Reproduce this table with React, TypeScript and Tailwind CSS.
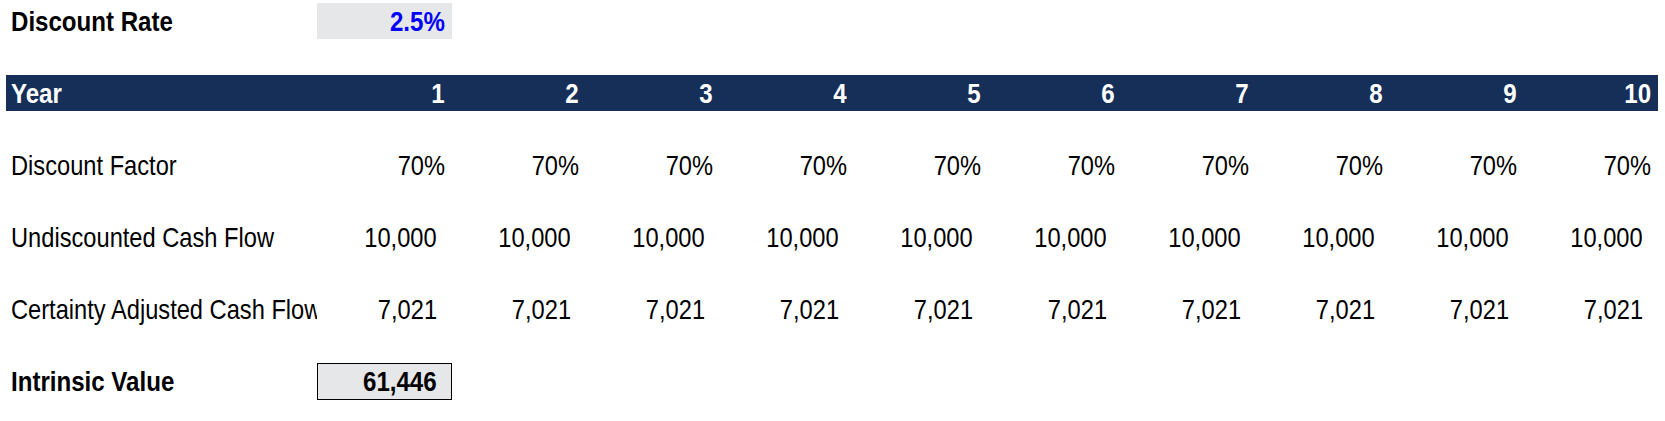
const years = [1, 2, 3, 4, 5, 6, 7, 8, 9, 10];

const rows = [
  { label: "Discount Factor", value: "70%", pad: "pr-[7px]" },
  { label: "Undiscounted Cash Flow", value: "10,000", pad: "pr-[15px]" },
  { label: "Certainty Adjusted Cash Flow", value: "7,021", pad: "pr-[15px]" },
];

// Arial Narrow is not installed: squeeze Liberation Sans to its width
function Narrow({ children, right, bold }: { children: React.ReactNode; right?: boolean; bold?: boolean }) {
  return (
    <span
      className={`inline-block whitespace-nowrap ${right ? "origin-right" : "origin-left"} ${
        bold ? "scale-x-[0.86] font-bold" : "scale-x-[0.845]"
      }`}
    >
      {children}
    </span>
  );
}

function Spacer() {
  return <div className="col-span-11" />;
}

export default function App() {
  return (
    <div className="h-[421px] w-[1665px] overflow-hidden bg-white pl-[6px] pt-[3px] font-['Liberation_Sans',Arial,sans-serif] text-[28px] leading-[38px] text-black">
      <div className="grid grid-cols-[311px_135px_repeat(9,134px)] auto-rows-[36px]">
        <div className="pl-[5px]">
          <Narrow bold>Discount Rate</Narrow>
        </div>
        <div className="bg-[#e6e7e8] pr-[7px] text-right text-[#0000ff]">
          <Narrow right bold>2.5%</Narrow>
        </div>
        <div className="col-span-9" />

        <Spacer />

        <div className="bg-[#152f59] pl-[5px] text-white">
          <Narrow bold>Year</Narrow>
        </div>
        {years.map((year) => (
          <div key={year} className="bg-[#152f59] pr-[7px] text-right text-white">
            <Narrow right bold>{year}</Narrow>
          </div>
        ))}

        {rows.map((row) => (
          <div key={row.label} className="contents">
            <Spacer />
            <div className="overflow-hidden pl-[5px]">
              <Narrow>{row.label}</Narrow>
            </div>
            {years.map((year) => (
              <div key={year} className={`text-right ${row.pad}`}>
                <Narrow right>{row.value}</Narrow>
              </div>
            ))}
          </div>
        ))}

        <Spacer />

        <div className="pl-[5px]">
          <Narrow bold>Intrinsic Value</Narrow>
        </div>
        <div className="h-[37px] border border-black bg-[#e6e7e8] pr-[14px] text-right leading-[36px]">
          <Narrow right bold>61,446</Narrow>
        </div>
        <div className="col-span-9" />
      </div>
    </div>
  );
}
